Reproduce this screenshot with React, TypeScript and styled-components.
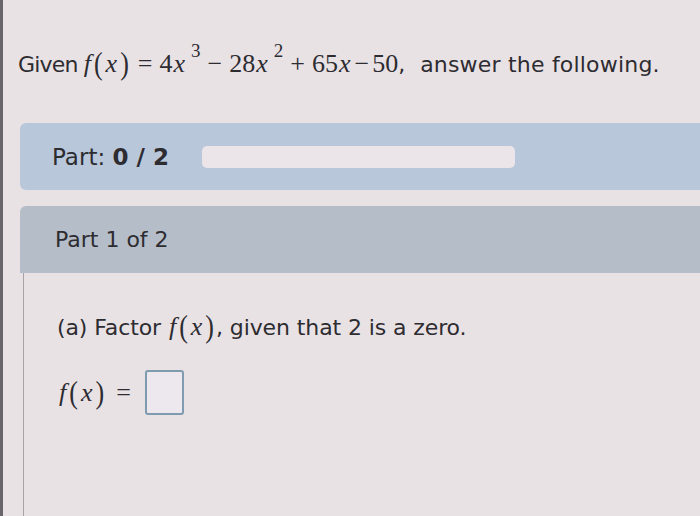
import styled, { createGlobalStyle } from "styled-components";

const GlobalStyle = createGlobalStyle`
  html, body {
    margin: 0;
    padding: 0;
    background: #e9e2e5;
  }
  body {
    font-family: "DejaVu Sans", Verdana, sans-serif;
    color: #2d2c31;
  }
`;

export default function App() {
  return (
    <>
      <GlobalStyle />
      <Page>
        <Title>
          <Lead>Given</Lead>
          <FofX />
          <Math>
            <Op>=</Op>4<V>x</V>
            <Sup>3</Sup>
            <Op>−</Op>28<V>x</V>
            <Sup>2</Sup>
            <Op>+</Op>65<V>x</V>
            <Op $tight>−</Op>50
          </Math>
          ,<Trail>answer the following.</Trail>
        </Title>

        <ProgressBox>
          <span>
            Part: <b>0 / 2</b>
          </span>
          <Track />
        </ProgressBox>

        <PartHeader>Part 1 of 2</PartHeader>

        <PartBody>
          <Question>
            (a) Factor <FofX />, given that 2 is a zero.
          </Question>
          <AnswerRow>
            <FofX />
            <Math>
              <Op>=</Op>
            </Math>
            <AnswerBox />
          </AnswerRow>
        </PartBody>
      </Page>
    </>
  );
}

function FofX() {
  return (
    <Math>
      <V>f</V>
      <Paren>(</Paren>
      <V>x</V>
      <Paren>)</Paren>
    </Math>
  );
}

const Page = styled.div`
  height: 516px;
  border-left: 3px solid #6a656b;
  box-sizing: border-box;
  display: flex;
  flex-direction: column;
  overflow: hidden;
`;

const Title = styled.div`
  font-size: 22px;
  padding: 48px 0 0 15px;
  height: 42px;
  line-height: 32px;
  white-space: nowrap;
`;

const Lead = styled.span`
  letter-spacing: -0.8px;
  margin-right: 5px;
`;

const Trail = styled.span`
  letter-spacing: 0.2px;
  margin-left: 15px;
`;

const Math = styled.span`
  font-family: "Liberation Serif", "Times New Roman", serif;
  font-size: 26px;
  letter-spacing: 0;
`;

const V = styled.i`
  font-style: italic;
  padding: 0 1px;
`;

const Paren = styled.span`
  display: inline-block;
  transform: scaleY(1.25);
  padding: 0 2px;
`;

const Op = styled.span<{ $tight?: boolean }>`
  padding: ${(p) => (p.$tight ? "0 3px 0 3px" : "0 7px")};
`;

const Sup = styled.sup`
  font-size: 19px;
  vertical-align: 0;
  position: relative;
  top: -15px;
  margin-left: 5px;
`;

const ProgressBox = styled.div`
  margin: 33px 0 0 17px;
  height: 67px;
  background: #b9c7da;
  border-radius: 6px 0 0 6px;
  display: flex;
  align-items: center;
  gap: 33px;
  padding-left: 32px;
  font-size: 23px;
  b {
    font-weight: bold;
  }
`;

const Track = styled.div`
  width: 313px;
  height: 22px;
  border-radius: 5px;
  background: #ebe5e9;
`;

const PartHeader = styled.div`
  margin: 16px 0 0 17px;
  height: 67px;
  background: #b5bdc9;
  border-radius: 6px 0 0 0;
  display: flex;
  align-items: center;
  padding-left: 35px;
  font-size: 22px;
`;

const PartBody = styled.div`
  flex: 1;
  margin-left: 20px;
  border-left: 1px solid #a8a3a9;
  padding: 38px 0 0 33px;
  display: flex;
  flex-direction: column;
  gap: 26px;
`;

const Question = styled.div`
  font-size: 22px;
  line-height: 32px;
  white-space: nowrap;
  letter-spacing: -0.1px;
`;

const AnswerRow = styled.div`
  display: flex;
  align-items: center;
  gap: 2px;
  padding-left: 1px;
  ${Op} {
    padding: 0 8px;
  }
`;

const AnswerBox = styled.div`
  width: 35px;
  height: 41px;
  margin-left: 4px;
  border: 2px solid #7f9bb0;
  border-radius: 3px;
  background: #ece8ed;
`;
